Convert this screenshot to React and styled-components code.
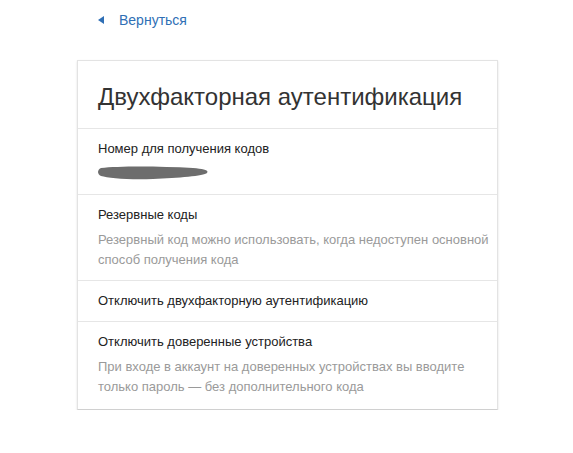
import React from 'react';
import styled, { createGlobalStyle } from 'styled-components';

const GlobalStyle = createGlobalStyle`
  body {
    margin: 0;
    background: #fff;
    font-family: "Liberation Sans", Arial, sans-serif;
  }
`;

const Page = styled.div`
  width: 421px;
  margin-left: 77px;
`;

const BackLink = styled.a`
  display: flex;
  align-items: center;
  gap: 15px;
  height: 40px;
  padding-left: 21px;
  color: #2f6fb5;
  font-size: 14px;
  text-decoration: none;
  cursor: pointer;
`;

const Arrow = styled.span`
  width: 0;
  height: 0;
  border-top: 4px solid transparent;
  border-bottom: 4px solid transparent;
  border-right: 6px solid #2f6fb5;
`;

const Card = styled.div`
  margin-top: 20px;
  border: 1px solid #e3e3e3;
  border-bottom-color: #d0d0d0;
  box-shadow: 0 1px 2px rgba(0, 0, 0, 0.12);
  background: #fff;
`;

const Header = styled.h1`
  margin: 0;
  padding: 22px 20px 17px;
  font-size: 24px;
  line-height: 28px;
  font-weight: 400;
  color: #333;
  border-bottom: 1px solid #e6e6e6;
`;

const Row = styled.div`
  padding: 10px 6px ${p => (p.$tall ? '12px' : '10px')} 20px;
  border-bottom: ${p => (p.$last ? 'none' : '1px solid #e6e6e6')};
`;

const RowTitle = styled.div`
  font-size: 13px;
  line-height: 20px;
  color: #222;
`;

const RowText = styled.div`
  margin-top: 5px;
  font-size: 13px;
  line-height: 20px;
  color: #9a9a9a;
`;

const Blob = styled.svg`
  display: block;
  margin-top: 6px;
  margin-bottom: 3px;
`;

export default function App() {
  return (
    <>
      <GlobalStyle />
      <Page>
        <BackLink>
          <Arrow />
          Вернуться
        </BackLink>
        <Card>
          <Header>Двухфакторная аутентификация</Header>
          <Row>
            <RowTitle>Номер для получения кодов</RowTitle>
            <Blob width="112" height="16" viewBox="0 0 112 16">
              <path
                d="M3 3 C 20 1, 60 1, 95 3 C 106 4, 111 5, 109 8 C 106 11, 80 13, 55 14 C 30 15, 10 13, 3 11 C -1 9, -1 5, 3 3 Z"
                fill="#6d6d6d"
              />
            </Blob>
          </Row>
          <Row>
            <RowTitle>Резервные коды</RowTitle>
            <RowText>
              Резервный код можно использовать, когда недоступен основной способ получения кода
            </RowText>
          </Row>
          <Row>
            <RowTitle>Отключить двухфакторную аутентификацию</RowTitle>
          </Row>
          <Row $last $tall>
            <RowTitle>Отключить доверенные устройства</RowTitle>
            <RowText>
              При входе в аккаунт на доверенных устройствах вы вводите только пароль — без дополнительного кода
            </RowText>
          </Row>
        </Card>
      </Page>
    </>
  );
}
